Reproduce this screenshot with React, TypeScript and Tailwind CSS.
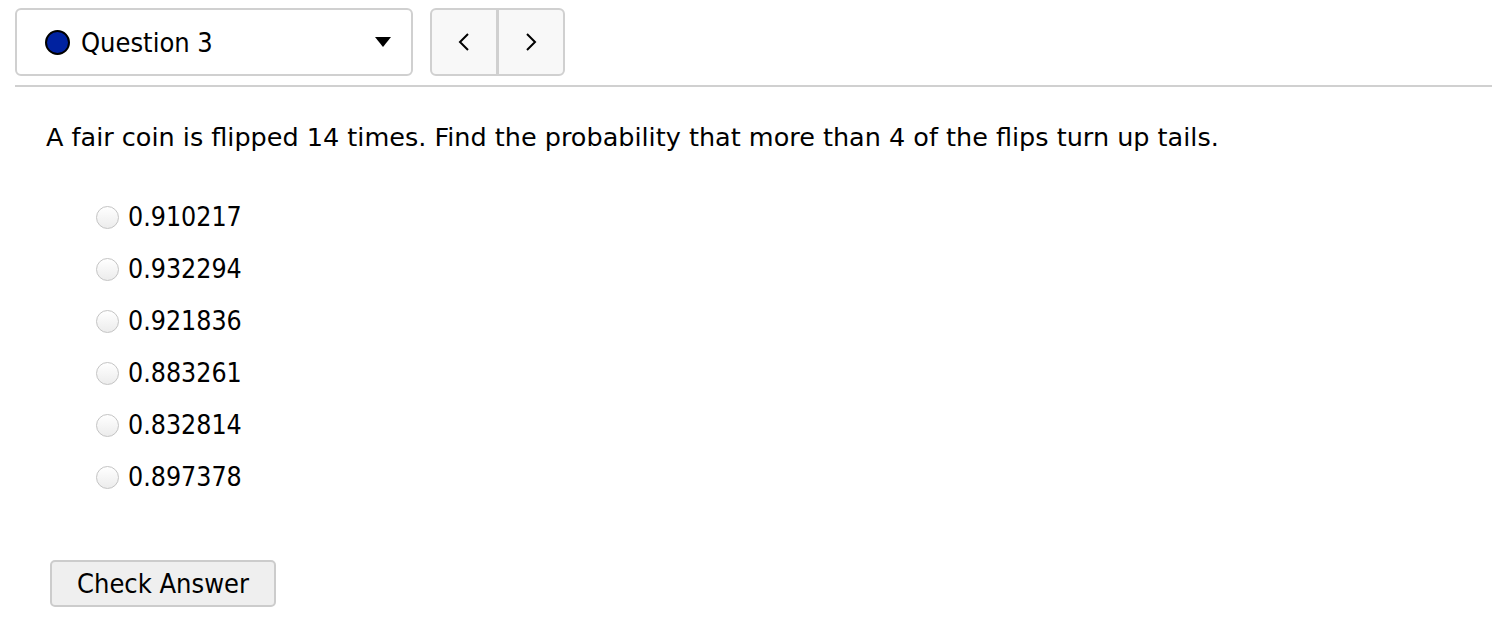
const options = ["0.910217", "0.932294", "0.921836", "0.883261", "0.832814", "0.897378"];

const regular = { fontFamily: '"DejaVu Sans", "Liberation Sans", sans-serif' };
const condensed = { fontFamily: '"DejaVu Sans Condensed", "DejaVu Sans", sans-serif' };

const App = () => {
  return (
    <div className="w-[1492px] h-[642px] bg-white text-black overflow-hidden" style={condensed}>
      <div className="flex items-center gap-[17px] pl-[15px] pt-[8px]">
        <div className="w-[398px] h-[68px] border-2 border-[#d0d0d0] rounded-[6px] flex items-center pl-[28px] pr-[20px]">
          <span className="w-[25px] h-[25px] rounded-full bg-[#0022a0] border-2 border-black shrink-0" />
          <span className="ml-[11px] text-[27px] leading-none">Question 3</span>
          <span className="ml-auto">
            <svg width="16" height="12" viewBox="0 0 16 12">
              <polygon points="0,1 16,1 8,11" fill="#000" />
            </svg>
          </span>
        </div>
        <div className="w-[135px] h-[68px] border-2 border-[#d0d0d0] rounded-[6px] bg-[#f8f8f8] flex">
          <button className="flex-1 flex items-center justify-center border-r-[3px] border-[#d0d0d0]">
            <svg width="12" height="18" viewBox="0 0 12 18">
              <polyline points="10,1 2,9 10,17" fill="none" stroke="#000" strokeWidth="2" />
            </svg>
          </button>
          <button className="flex-1 flex items-center justify-center">
            <svg width="12" height="18" viewBox="0 0 12 18">
              <polyline points="2,1 10,9 2,17" fill="none" stroke="#000" strokeWidth="2" />
            </svg>
          </button>
        </div>
      </div>
      <div className="ml-[15px] mt-[9px] h-[2px] bg-[#d0d0d0]" />

      <p className="ml-[46px] mt-[35px] text-[25.5px] leading-[30px]" style={regular}>
        A fair coin is flipped 14 times. Find the probability that more than 4 of the flips turn up tails.
      </p>

      <div className="ml-[96px] mt-[50px] flex flex-col gap-[22px]">
        {options.map((o) => (
          <label key={o} className="flex items-center h-[30px]">
            <span className="w-[23px] h-[23px] rounded-full border border-[#c4c4c4] bg-gradient-to-b from-white to-[#ececec] shrink-0" />
            <span className="ml-[9px] text-[26.5px] leading-none">{o}</span>
          </label>
        ))}
      </div>

      <button className="ml-[50px] mt-[68px] w-[226px] h-[47px] border-2 border-[#cccccc] rounded-[5px] bg-[#efefef] text-[27px] leading-none">
        Check Answer
      </button>
    </div>
  );
};

export default App;
